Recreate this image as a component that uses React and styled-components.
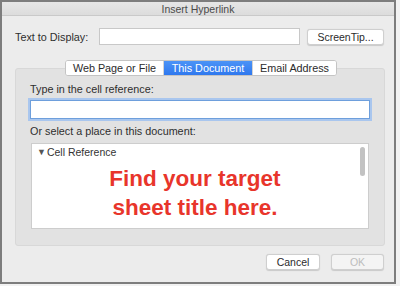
import React, { useState } from 'react';
import styled, { createGlobalStyle } from 'styled-components';

const GlobalStyle = createGlobalStyle`
  html, body {
    margin: 0;
    padding: 0;
    background: #f2f2f2;
  }
  * {
    box-sizing: border-box;
  }
`

const Window = styled.div`
  width: 396px;
  height: 284px;
  border: 2px solid #7d7d7d;
  background: #ececec;
  display: flex;
  flex-direction: column;
  font-family: "Liberation Sans", Arial, sans-serif;
  font-size: 10.5px;
  color: #2b2b2b;
`

const TitleBar = styled.div`
  height: 14px;
  background: linear-gradient(#e6e6e6, #dcdcdc);
  border-bottom: 1px solid #c9c9c9;
  display: flex;
  align-items: center;
  justify-content: center;
  font-size: 10.5px;
  color: #4a4a4a;
`

const Body = styled.div`
  flex: 1;
  display: flex;
  flex-direction: column;
  padding: 12px 10px 0 13px;
`

const TopRow = styled.div`
  display: flex;
  align-items: center;
  height: 17px;
`

const Label = styled.span`
  width: 84px;
  font-size: 10.8px;
  color: #2e2e2e;
`

const TextInput = styled.input`
  width: ${(p) => p.width}px;
  height: ${(p) => p.height}px;
  border: ${(p) => (p.focused ? '1px solid #6e9fdc' : '1px solid #c8c8c8')};
  box-shadow: ${(p) => (p.focused ? '0 0 0 2px #a9c6ee' : 'none')};
  background: #fff;
  outline: none;
  padding: 0 4px;
  font-family: inherit;
  font-size: 10.5px;
`

const Button = styled.button`
  width: ${(p) => p.width}px;
  height: 16px;
  margin-left: ${(p) => p.gap || 0}px;
  border: 1px solid #cfcfcf;
  border-radius: 3px;
  box-shadow: 0 0.5px 1px rgba(0, 0, 0, 0.15);
  font-family: inherit;
  font-size: 10.5px;
  color: ${(p) => (p.disabled ? '#bdbdbd' : '#2b2b2b')};
  background: ${(p) => (p.disabled ? '#f4f4f4' : '#fff')};
  padding: 0;
`

const GroupWrap = styled.div`
  position: relative;
  margin-top: 15px;
  display: flex;
  flex-direction: column;
`

const Tabs = styled.div`
  position: absolute;
  top: 0;
  left: 50px;
  display: flex;
  height: 16px;
  border: 1px solid #c4c4c4;
  border-radius: 3px;
  background: #fff;
  overflow: hidden;
  z-index: 1;
`

const Tab = styled.div`
  width: ${(p) => p.width}px;
  display: flex;
  align-items: center;
  justify-content: center;
  font-size: 10.8px;
  color: ${(p) => (p.active ? '#fff' : '#2b2b2b')};
  background: ${(p) => (p.active ? 'linear-gradient(#4b93f7, #2f78ee)' : '#fff')};
  border-left: ${(p) => (p.first ? 'none' : '1px solid #d2d2d2')};
`

const Group = styled.div`
  margin-top: 8px;
  width: 370px;
  height: 178px;
  background: #e2e2e2;
  border: 1px solid #d8d8d8;
  border-radius: 3px;
  display: flex;
  flex-direction: column;
  padding: 14px 15px 0 14px;
`

const GroupLabel = styled.div`
  font-size: 10.8px;
  color: #2e2e2e;
  line-height: 12px;
  margin-top: ${(p) => p.mt || 0}px;
  margin-bottom: ${(p) => p.mb || 0}px;
`

const ListBox = styled.div`
  position: relative;
  margin-top: 6px;
  margin-left: 1px;
  width: 338px;
  height: 86px;
  background: #fff;
  border: 1px solid #cdcdcd;
  display: flex;
  flex-direction: column;
`

const TreeRow = styled.div`
  display: flex;
  align-items: center;
  padding: 2px 0 0 5px;
  font-size: 10.5px;
  color: #333;
  gap: 1px;
`

const Triangle = styled.span`
  font-size: 9px;
  color: #555;
`

const Callout = styled.div`
  margin-top: 6px;
  margin-right: 10px;
  text-align: center;
  font-family: "Liberation Sans", Arial, sans-serif;
  font-weight: bold;
  font-size: 22.5px;
  line-height: 29px;
  color: #e8352b;
`

const ScrollThumb = styled.div`
  position: absolute;
  top: 3px;
  right: 3px;
  width: 5px;
  height: 29px;
  border-radius: 3px;
  background: #c2c2c2;
`

const Footer = styled.div`
  display: flex;
  justify-content: flex-end;
  margin-top: 8px;
`

const App = () => {
  const [tab, setTab] = useState('doc');

  const tabs = [
    { key: 'web', label: 'Web Page or File', width: 97 },
    { key: 'doc', label: 'This Document', width: 89 },
    { key: 'mail', label: 'Email Address', width: 84 },
  ];

  return (
    <>
      <GlobalStyle />
      <Window>
        <TitleBar>Insert Hyperlink</TitleBar>
        <Body>
          <TopRow>
            <Label>Text to Display:</Label>
            <TextInput width={201} height={17} />
            <Button width={77} gap={7}>ScreenTip...</Button>
          </TopRow>
          <GroupWrap>
            <Tabs>
              {tabs.map((t, i) => (
                <Tab
                  key={t.key}
                  width={t.width}
                  first={i === 0}
                  active={tab === t.key}
                  onClick={() => setTab(t.key)}
                >
                  {t.label}
                </Tab>
              ))}
            </Tabs>
            <Group>
              <GroupLabel mb={5}>Type in the cell reference:</GroupLabel>
              <TextInput width={340} height={19} focused />
              <GroupLabel mt={6}>Or select a place in this document:</GroupLabel>
              <ListBox>
                <TreeRow>
                  <Triangle>▼</Triangle>
                  Cell Reference
                </TreeRow>
                <Callout>
                  Find your target
                  <br />
                  sheet title here.
                </Callout>
                <ScrollThumb />
              </ListBox>
            </Group>
          </GroupWrap>
          <Footer>
            <Button width={54}>Cancel</Button>
            <Button width={53} gap={11} disabled>OK</Button>
          </Footer>
        </Body>
      </Window>
    </>
  );
};

export default App;
